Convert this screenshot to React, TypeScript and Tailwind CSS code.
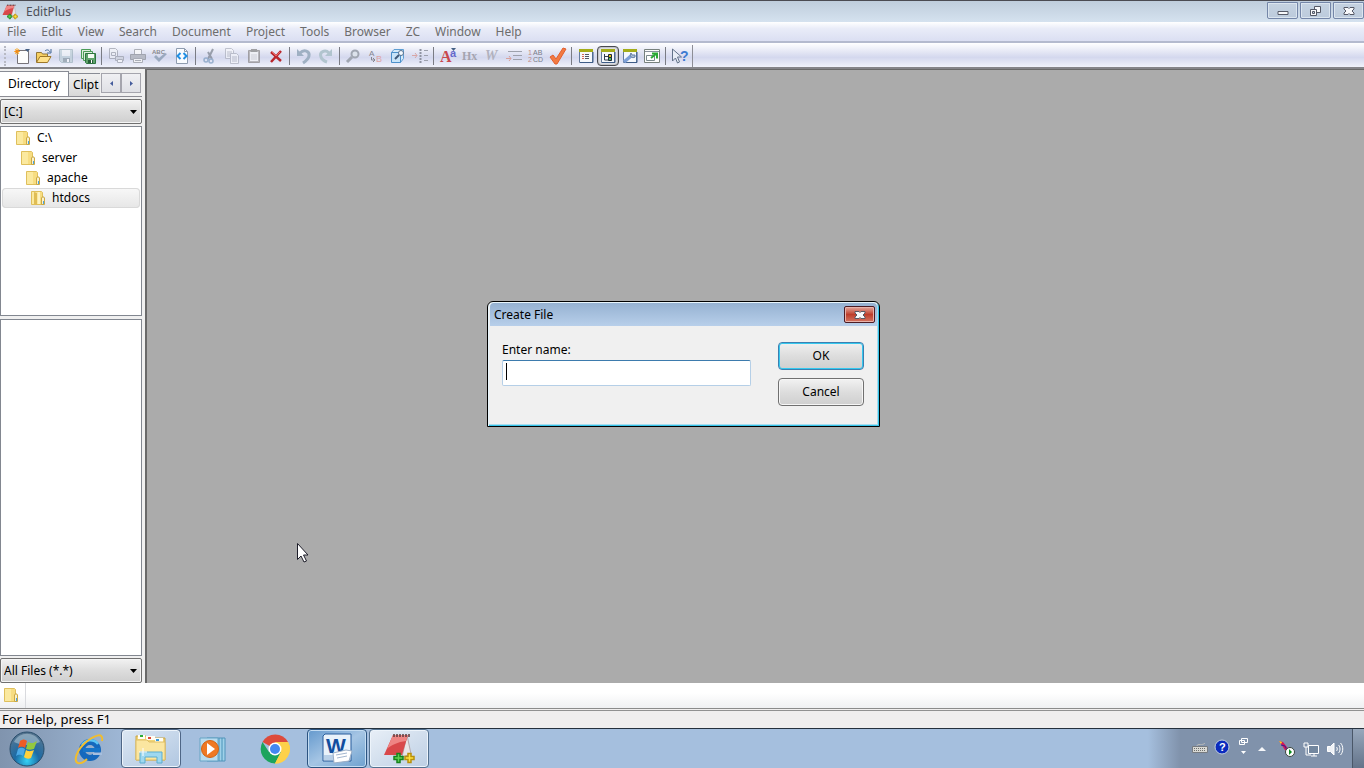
import type { ReactNode } from 'react';

interface IconProps {
  children: ReactNode;
  size?: string;
  box?: string;
}

/** Small wrapper so that every icon shares the same svg attributes. */
function Icon({ children, size = 'size-4', box = '0 0 16 16' }: IconProps) {
  return (
    <svg className={`${size} shrink-0 overflow-visible`} viewBox={box} fill="none" aria-hidden="true">
      {children}
    </svg>
  );
}

const menus = ['File', 'Edit', 'View', 'Search', 'Document', 'Project', 'Tools', 'Browser', 'ZC', 'Window', 'Help'];

const folders = [
  { name: 'C:\\', indent: 'pl-[13px]' },
  { name: 'server', indent: 'pl-[18px]' },
  { name: 'apache', indent: 'pl-[23px]' },
  { name: 'htdocs', indent: 'pl-[28px]', selected: true },
];

function EditPlusIcon({ size = 'size-4' }: { size?: string }) {
  return (
    <Icon size={size} box="0 0 32 32">
      <path d="M24 2 28 21 19 24z" fill="#e9e4e6" stroke="#b3a9ad" />
      <path d="M10 2h15l-6 20H1z" fill="#d9484a" />
      <path d="M10 2h15l-2 6C15 9 8 12 4 16z" fill="#ef8584" />
      <path d="M11 1v3M14 1v3M17 1v3M20 1v3M23 1v3M26 1v3" stroke="#5b3b3c" strokeWidth="1.5" />
      <path d="M14 20.500h3v3h3v3h-3v3h-3v-3h-3v-3h3z" fill="#5fd052" stroke="#16831c" strokeWidth="1.500" />
      <path d="M25 20.500h3v3h3v3h-3v3h-3v-3h-3v-3h3z" fill="#ffe23d" stroke="#b9900c" strokeWidth="1.500" />
    </Icon>
  );
}

function FolderIcon({ open = false }: { open?: boolean }) {
  return (
    <Icon>
      <path d="M1.500 1.500h10l1 1v12h-11z" fill="#f7dd82" stroke="#dfbf5c" />
      <path d="M2 2h6v12H2z" fill="#fbe99f" />
      {open && (
        <>
          <path d="M4 2l3 1v12l-3-1z" fill="#e0bd55" />
          <path d="M8 2h2v12H8z" fill="#fdf3c4" />
        </>
      )}
      <path d="M11.500 8c0-1.500 3-1.500 3 0v6.500h-3z" fill="#fbf1cc" stroke="#cba945" />
      <path d="M13.500 11v3" stroke="#49a3df" />
    </Icon>
  );
}

function DocPanel({ children }: { children?: ReactNode }) {
  return (
    <>
      <path d="M1.500 1.500h13v13h-13z" fill="#f5f8fc" stroke="#637b9d" />
      <path d="M1 1h14v3H1z" fill="#a4ad19" />
      <path d="M2 14.500h13V4" stroke="#3e5c87" />
      {children}
    </>
  );
}

const toolGroups: { label: string; active?: boolean; icon: ReactNode }[][] = [
  [
    {
      label: 'New',
      icon: (
        <>
          <path d="M3.500 2.500h11v13h-11z" fill="#fdfdfd" stroke="#77747a" />
          <path d="M11 1h5l-2.500 3z" fill="#456084" />
          <path d="M3 0v7M0 3.500h6M1 1l4 5M5 1 1 6" stroke="#f7b343" />
          <circle cx="3" cy="3.500" r="1.800" fill="#f28c18" />
        </>
      ),
    },
    {
      label: 'Open',
      icon: (
        <>
          <path d="M.5 14V4.500h5l1 1.500h5v3" fill="#f6cf62" stroke="#927638" />
          <path d="M.5 14.500 4 8.500h11l-3.500 6z" fill="#ffe18b" stroke="#9d7729" />
          <path d="M9 3c2-2 4-1 5 1M15 1v4h-4" stroke="#426796" />
        </>
      ),
    },
    {
      label: 'Save',
      icon: (
        <g opacity=".55">
          <path d="M1.500 1.500h13v13h-11l-2-2z" fill="#b5cad0" stroke="#8aa2ac" />
          <path d="M4 2h8v6H4z" fill="#f6f9f9" />
          <path d="M5 10h7v4H5z" fill="#70838c" />
          <path d="M9 11h2v3H9z" fill="#fff" />
        </g>
      ),
    },
    {
      label: 'Save all',
      icon: (
        <>
          <path d="M1.500 1.500h9v9h-9z" fill="#dceedd" stroke="#4b9c57" />
          <path d="M3.500 3.500h9v9h-9z" fill="#dceedd" stroke="#4b9c57" />
          <path d="M5.500 5.500h10v10h-9l-1-1z" fill="#5fa46c" stroke="#2d7540" />
          <path d="M8 6h6v4H8z" fill="#f3faf3" />
          <path d="M8 12h5v3H8z" fill="#275d39" />
          <path d="M11 12h1v3h-1z" fill="#fff" />
        </>
      ),
    },
  ],
  [
    {
      label: 'Print preview',
      icon: (
        <g opacity=".6">
          <path d="M1.500.5h6l2 2v8h-8z" fill="#f3f4f7" stroke="#8e929c" />
          <path d="M3.500 4.500h4v3h-4z" stroke="#8e929c" />
          <path d="M7.500 8.500h8v4h-8z" fill="#ccd0d8" stroke="#8e929c" />
          <path d="M9.500 11.500h5v3h-5z" fill="#fff" stroke="#8e929c" />
        </g>
      ),
    },
    {
      label: 'Print',
      icon: (
        <g opacity=".75">
          <path d="M4.500 1.500h7v5h-7z" fill="#fafafa" stroke="#999ca4" />
          <path d="M.5 6.500h15v5H.5z" fill="#adb0b8" stroke="#8d9199" />
          <path d="M3.500 10.500h9v4h-9z" fill="#f7f7f7" stroke="#999ca4" />
          <path d="M5 12.500h6" stroke="#999ca4" />
        </g>
      ),
    },
    {
      label: 'Spelling',
      icon: (
        <>
          <text x="0" y="6" fontSize="6" fontWeight="bold" fontFamily="Liberation Sans" fill="#88898f">
            ABC
          </text>
          <path d="m2 9 2-2 3 3 6-5 2 1-8 8z" fill="#9aa9bf" />
        </>
      ),
    },
    {
      label: 'View in browser',
      icon: (
        <>
          <path d="M2.500.5h8l3 3v12h-11z" fill="#fafcff" stroke="#8f9caf" />
          <path d="M10.500.5v3h3" stroke="#8f9caf" />
          <path d="m6.500 5-3 3 3 3M9.500 5l3 3-3 3" stroke="#218fe4" strokeWidth="2" />
        </>
      ),
    },
  ],
  [
    {
      label: 'Cut',
      icon: (
        <g opacity=".65">
          <path d="M11 1 6 11M6 4l4 7" stroke="#717984" strokeWidth="2" />
          <circle cx="4" cy="12" r="2" stroke="#7496bb" strokeWidth="1.500" />
          <circle cx="9" cy="13" r="2" stroke="#7496bb" strokeWidth="1.500" />
        </g>
      ),
    },
    {
      label: 'Copy',
      icon: (
        <g opacity=".6" stroke="#a2a6b2">
          <path d="M1.500.5h6l2 2v8h-8z" fill="#f7f8fb" />
          <path d="M3 4h5M3 6h5M3 8h5" />
          <path d="M6.500 5.500h6l2 2v8h-8z" fill="#f7f8fb" />
          <path d="M8 9h5M8 11h5M8 13h5" />
        </g>
      ),
    },
    {
      label: 'Paste',
      icon: (
        <g opacity=".75">
          <path d="M2.500 2.500h11v12h-11z" fill="#aba9ab" stroke="#8d8a8c" />
          <path d="M4 4h8v9H4z" fill="#f4f4f6" />
          <path d="M5 1h6v3H5z" fill="#888" />
          <path d="M5 7h6M5 9h6M5 11h6" stroke="#cbcbd0" />
        </g>
      ),
    },
    {
      label: 'Delete',
      icon: (
        <>
          <path d="m3 4 10 9M13 3 3 14" stroke="#b9262c" strokeWidth="2.500" />
          <path d="m4 4 4 4 4-4" stroke="#ec6663" />
        </>
      ),
    },
  ],
  [
    {
      label: 'Undo',
      icon: (
        <>
          <path d="M1 1v7h7z" fill="#9fb0c3" />
          <path d="M4 5c4-4 10-2 9 3-.5 3-3 5-6 7" stroke="#9fb0c3" strokeWidth="3" />
        </>
      ),
    },
    {
      label: 'Redo',
      icon: (
        <>
          <path d="M14 1v7H7z" fill="#b1c4ce" />
          <path d="M11 5C7 1 1 4 3 9c1 3 3 4 6 5" stroke="#b1c4ce" strokeWidth="3" />
        </>
      ),
    },
  ],
  [
    {
      label: 'Find',
      icon: (
        <g stroke="#a0a6b1">
          <circle cx="9" cy="6" r="3.500" fill="#dce2eb" strokeWidth="2" />
          <path d="m6 9-5 5" strokeWidth="3" />
        </g>
      ),
    },
    {
      label: 'Replace',
      icon: (
        <>
          <text x="1" y="8" fontSize="8" fontFamily="Liberation Sans" fill="#84858f">
            A
          </text>
          <text x="8" y="14" fontSize="9" fontFamily="Liberation Sans" fill="#dda5a6">
            B
          </text>
          <path d="M3.500 9v3h3M5 10l2 2-2 2" stroke="#84858f" />
        </>
      ),
    },
    {
      label: 'Find in files',
      icon: (
        <>
          <path d="M4 1.500h9.500v9l-3 4h-8l-1-1v-9z" fill="#d5eafa" stroke="#5e9ed2" />
          <path d="M1.500 4.500h9v10h-9z" fill="#c8e4f9" stroke="#4c90ca" />
          <circle cx="11" cy="5" r="2.500" fill="#f4faff" stroke="#56718f" />
          <path d="m9 7-4 4" stroke="#3e597a" strokeWidth="2" />
        </>
      ),
    },
    {
      label: 'Go to line',
      icon: (
        <>
          <path d="M0 7.500h5M3 5l2 2.500L3 10" stroke="#d8a6a5" />
          <path d="M8.500 1v14" stroke="#8f93a1" strokeWidth="2" strokeDasharray="2 1" />
          <path d="M12 2.500h4M12 7.500h4M12 12.500h4" stroke="#9da1ad" />
        </>
      ),
    },
  ],
  [
    {
      label: 'Font',
      icon: (
        <>
          <text x="0" y="14" fontSize="16" fontWeight="bold" fontFamily="Liberation Serif" fill="#c9484d">
            A
          </text>
          <text x="10" y="9" fontSize="11" fontWeight="bold" fontFamily="Liberation Sans" fill="#6468cc">
            a
          </text>
          <path d="M11 0h5l-2.500 3z" fill="#456084" />
        </>
      ),
    },
    {
      label: 'Hex viewer',
      icon: (
        <text x="0" y="12" fontSize="12" fontWeight="bold" fontFamily="Liberation Serif" fill="#a5a5b0">
          Hx
        </text>
      ),
    },
    {
      label: 'Word wrap',
      icon: (
        <text x="1" y="12" fontSize="14" fontWeight="bold" fontStyle="italic" fontFamily="Liberation Serif" fill="#b1b2be">
          W
        </text>
      ),
    },
    {
      label: 'Auto indent',
      icon: (
        <>
          <path d="M2 3.500h14M7 7.500h9M7 11.500h9" stroke="#9da1ac" />
          <path d="M0 10.500h5M3 8l2 2.500L3 13" stroke="#d8a09b" />
        </>
      ),
    },
    {
      label: 'Line number',
      icon: (
        <g fontSize="7" fontFamily="Liberation Sans">
          <text x="0" y="7" fill="#c18b84">1</text>
          <text x="5" y="7" fill="#777b88">AB</text>
          <text x="0" y="14" fill="#c18b84">2</text>
          <text x="5" y="14" fill="#777b88">CD</text>
        </g>
      ),
    },
    {
      label: 'Syntax check',
      icon: <path d="m0 9 3-2 3 4 7-11 3 1L7 16H5z" fill="#f27a42" stroke="#e25f2e" />,
    },
  ],
  [
    {
      label: 'Cliptext',
      icon: (
        <DocPanel>
          <path d="M4 6.500h2M4 8.500h2M4 10.500h2" stroke="#d46555" />
          <path d="M7 6.500h4M7 8.500h4M7 10.500h4" stroke="#4f5868" />
        </DocPanel>
      ),
    },
    {
      label: 'Directory window',
      active: true,
      icon: (
        <DocPanel>
          <path d="M4.500 6v6h4M4.500 8.500h4" stroke="#35404e" />
          <path d="M8.500 6.500h3v3h-3z" fill="#e1bf12" stroke="#1f2b33" />
          <path d="M8.500 9.500h3v3h-3z" fill="#45b96f" stroke="#1f2b33" />
        </DocPanel>
      ),
    },
    {
      label: 'Preferences',
      icon: (
        <DocPanel>
          <path d="m2 14 7-6" stroke="#7d9fd6" strokeWidth="3.500" />
          <path d="M9 5c-2 3 1 6 4 4V7h-3z" fill="#aabfd9" stroke="#637ca1" />
        </DocPanel>
      ),
    },
    {
      label: 'Full screen',
      icon: (
        <>
          <path d="M.5 1.500h15v13H.5z" fill="#fcfcfc" stroke="#77817d" />
          <path d="M1 3.500h14" stroke="#89929e" />
          <path d="M2.500 7.500h8v5h-8z" fill="#fff" stroke="#7b8a8e" />
          <path d="m7 10 5-4M8 5.500h5v5" stroke="#2ba934" strokeWidth="2" />
        </>
      ),
    },
  ],
  [
    {
      label: 'Context help',
      icon: (
        <>
          <path d="M.5 1v12l3-3 2 5 2-1-2-5h4z" fill="#e8edf6" stroke="#627289" />
          <text x="8" y="13" fontSize="14" fontWeight="bold" fontFamily="Liberation Sans" fill="#3d7ad1">
            ?
          </text>
        </>
      ),
    },
  ],
];

function TitleBar() {
  const button =
    'flex h-[17px] w-[31px] items-center justify-center rounded-b-xs border border-[#7486a8] bg-linear-to-b from-[#c5d2e1] to-[#bccbdc] shadow-[inset_0_0_0_1px_#dbe5ef]';
  return (
    <header className="flex h-[22px] shrink-0 items-center justify-between border-t border-[#4b4b52] bg-linear-to-b from-[#bfcddc] to-[#d5e2ef]">
      <h1 className="flex items-center gap-2 pl-[2px] text-[#4c5058]">
        <EditPlusIcon />
        EditPlus
      </h1>
      <div className="flex gap-[2px] self-start pt-px">
        <button className={button} aria-label="Minimize">
          <Icon>
            <path d="M3 8.500h10v3H3z" fill="#f7f8fa" stroke="#555966" />
          </Icon>
        </button>
        <button className={button} aria-label="Restore">
          <Icon>
            <path d="M6.500 3.500h6v6h-6z" fill="#f7f8fa" stroke="#555966" />
            <path d="M2.500 6.500h6v6h-6z" fill="#f7f8fa" stroke="#555966" />
            <path d="M4.500 8.500h2v2h-2z" fill="#c4d0df" stroke="#555966" />
          </Icon>
        </button>
        <button className={button} aria-label="Close">
          <Icon>
            <CloseMark />
          </Icon>
        </button>
      </div>
    </header>
  );
}

function CloseMark() {
  return (
    <>
      <path d="M3 4.500h4l1 1 1-1h4v1.500l-2 2 2 2v1.500H9l-1-1-1 1H3v-1.500l2-2-2-2z" fill="#f7f8fa" stroke="#555966" />
    </>
  );
}

function MenuBar() {
  return (
    <nav className="flex h-[21px] shrink-0 gap-[15px] border-b-2 border-[#b4bace] bg-linear-to-b from-white via-[#e9ecf8] via-35% to-[#dbdff2] pl-[7px] text-[#6d6d6d]">
      {menus.map((menu) => (
        <button key={menu}>{menu}</button>
      ))}
    </nav>
  );
}

function Toolbar() {
  return (
    <div
      role="toolbar"
      className="flex h-[26px] shrink-0 items-center border-b-2 border-[#85858a] bg-linear-to-b from-white via-[#d4d8ee] via-60% to-[#f0f2fb] pt-[2px]"
    >
      <div className="ml-1 mr-[5px] h-5 border-l-2 border-dotted border-[#b8bac4]" />
      {toolGroups.map((group, index) => (
        <div key={group[0].label} className="flex items-center">
          {index > 0 && <div className="ml-[2px] mr-[3px] h-[18px] w-px bg-[#7a7c84]" />}
          {group.map((tool) => (
            <button
              key={tool.label}
              aria-label={tool.label}
              className={`flex h-5 w-[22px] items-center justify-center ${
                tool.active ? 'rounded-sm border border-[#484a50] bg-[#e2e3e9] shadow-[inset_0_0_2px_#777]' : ''
              }`}
            >
              <Icon>{tool.icon}</Icon>
            </button>
          ))}
        </div>
      ))}
      <div className="ml-px h-[22px] w-px bg-[#8d8e96]" />
    </div>
  );
}

function Combo({ label, value }: { label: string; value: string }) {
  return (
    <div className="relative h-[25px] shrink-0">
      <select
        aria-label={label}
        className="h-full w-full appearance-none rounded-xs border border-[#707070] bg-linear-to-b from-[#f2f2f2] via-[#dddddd] via-50% to-[#cfcfcf] pl-[3px] shadow-[inset_0_0_0_1px_#f5f5f5] outline-none"
      >
        <option>{value}</option>
      </select>
      <svg className="pointer-events-none absolute right-[5px] top-[11px] h-1 w-[7px]" viewBox="0 0 7 4" aria-hidden="true">
        <path d="M0 0h7L3.500 4z" fill="#000" />
      </svg>
    </div>
  );
}

function Sidebar() {
  const arrow = 'flex h-5 w-5 items-center justify-center border border-[#a5a5ad] bg-linear-to-b from-[#f0f0f3] to-[#dfe0e5]';
  return (
    <aside className="flex w-[145px] shrink-0 flex-col bg-[#f0f0f0] pr-[3px] pt-[2px]">
      <div className="flex h-[26px] shrink-0 border-b border-[#8c8c94]" role="tablist">
        <button role="tab" aria-selected="true" className="w-[69px] shrink-0 border-r border-t border-[#898c95] bg-white">
          Directory
        </button>
        <button
          role="tab"
          aria-selected="false"
          className="mt-[2px] w-[31px] overflow-hidden border-t border-[#898c95] bg-linear-to-b from-[#f0f0f0] to-[#d8d8d8] pl-1 text-left"
        >
          Clipt
        </button>
        <div className="flex pl-px pt-[2px]">
          <button className={arrow} aria-label="Previous tab">
            <svg className="h-[5px] w-[3px]" viewBox="0 0 3 5" aria-hidden="true">
              <path d="M3 0v5L0 2.500z" fill="#455c9c" />
            </svg>
          </button>
          <button className={arrow} aria-label="Next tab">
            <svg className="h-[5px] w-[3px]" viewBox="0 0 3 5" aria-hidden="true">
              <path d="M0 0v5l3-2.500z" fill="#455c9c" />
            </svg>
          </button>
        </div>
      </div>

      <div className="mt-[2px] flex min-h-0 flex-1 flex-col">
        <Combo label="Drive" value="[C:]" />
        <ul className="mt-[2px] h-[190px] shrink-0 border border-[#828790] bg-white px-px pt-px">
          {folders.map((folder) => (
            <li key={folder.name}>
              <button
                className={`flex h-5 w-full items-center gap-[6px] ${folder.indent} ${
                  folder.selected
                    ? 'rounded-sm bg-linear-to-b from-[#f8f8f8] to-[#e6e6e6] shadow-[inset_0_0_0_1px_#d9d9d9]'
                    : ''
                }`}
              >
                <FolderIcon open={folder.selected} />
                {folder.name}
              </button>
            </li>
          ))}
        </ul>
        <div className="mb-[2px] mt-[3px] min-h-0 flex-1 border border-[#828790] bg-white" />
        <Combo label="File filter" value="All Files (*.*)" />
      </div>
    </aside>
  );
}

function CreateFileDialog() {
  return (
    <form
      role="dialog"
      aria-labelledby="dialog-title"
      className="absolute left-[487px] top-[301px] flex h-[126px] w-[393px] flex-col rounded-t-md border border-black bg-[#f0f0f0] shadow-[inset_1px_1px_0_#e8f5fc,inset_-1px_-1px_0_#35c3e8,inset_-2px_-2px_0_#a9dcee]"
    >
      <div className="mx-[2px] mt-px flex h-[23px] items-center justify-between rounded-t-sm bg-linear-to-b from-[#96b2d2] to-[#b8cfea] pl-1 pr-[2px]">
        <h2 id="dialog-title">Create File</h2>
        <button
          type="button"
          aria-label="Close dialog"
          className="flex h-[17px] w-[31px] items-center justify-center rounded-xs border border-[#4c1c24] bg-linear-to-b from-[#e3a69d] via-[#bd3d2b] via-50% to-[#d37361] shadow-[inset_0_0_0_1px_#e8b3ab]"
        >
          <Icon>
            <CloseMark />
          </Icon>
        </button>
      </div>
      <div className="flex justify-between pl-[14px] pr-[15px] pt-4">
        <div className="relative flex w-[249px] flex-col">
          <label htmlFor="file-name" className="h-[18px]">
            Enter name:
          </label>
          <input
            id="file-name"
            className="h-[26px] rounded-xs border border-[#b5cfe7] border-t-[#3d7bad] bg-white px-1 caret-transparent outline-none"
          />
          <span className="absolute left-1 top-[21px] h-[17px] w-px bg-black" />
        </div>
        <div className="flex w-[86px] flex-col gap-2">
          <button className="h-7 rounded-sm border border-[#3c7fb1] bg-linear-to-b from-[#f0f0f0] via-[#dddddd] via-50% to-[#cfcfcf] shadow-[inset_0_0_0_1px_#35c8ee]">
            OK
          </button>
          <button
            type="button"
            className="h-7 rounded-sm border border-[#707070] bg-linear-to-b from-[#f2f2f2] via-[#dddddd] via-50% to-[#cfcfcf] shadow-[inset_0_0_0_1px_#f6f6f6]"
          >
            Cancel
          </button>
        </div>
      </div>
    </form>
  );
}

const taskbarApps: { label: string; frame: string; icon: ReactNode }[] = [
  {
    label: 'Internet Explorer',
    frame: 'border-transparent',
    icon: (
      <Icon size="size-8" box="0 0 32 32">
        <circle cx="17" cy="17" r="8" stroke="#1568bd" strokeWidth="6" />
        <path d="M9 12c3-5 11-7 16-1" stroke="#5cc5f5" strokeWidth="2.500" />
        <path d="M10 15h17v4H10z" fill="#1674c9" />
        <path d="M20 19.500h9v2.500h-9z" fill="#a6bfdf" />
        <path d="M29 8c2-10-9-5-17 2S0 28 5 30c3 1 7-2 9-4" stroke="#f1bd2e" strokeWidth="2" />
      </Icon>
    ),
  },
  {
    label: 'Windows Explorer',
    frame: 'border-[#4e6686] bg-linear-to-br from-[#dce7f3] to-[#b1c7e1] shadow-[inset_0_0_0_1px_#edf4fb]',
    icon: (
      <Icon size="size-8" box="0 0 32 32">
        <path d="M1 3h10l2 2h17v22H1z" fill="#f2d578" stroke="#c8a64a" />
        <path d="M3 2h7v4H3zM11 3h9v4h-9zM20 5h8v4h-8z" fill="#fffdf4" />
        <path d="M5 2h3v2H5z" fill="#2dad36" />
        <path d="M13 4h3v2h-3z" fill="#dc4938" />
        <path d="M21 6h3v2h-3z" fill="#379bde" />
        <path d="M1 7h11l2 2h16v18H1z" fill="#fbe6a0" stroke="#dfbe64" />
        <path d="M5 30V19h22v11h-5v-6H10v6z" fill="#9ed8f0" stroke="#5aadd0" />
        <path d="M8 15v8M4 19h8" stroke="#fff" />
      </Icon>
    ),
  },
  {
    label: 'Media Player',
    frame: 'border-transparent',
    icon: (
      <Icon size="size-8" box="0 0 32 32">
        <path d="M10 5h18v23H10z" fill="#9fd1e9" stroke="#5094ba" />
        <path d="M25 5v23M22 5v23" stroke="#4a92b8" />
        <path d="M3 5h18v23H3z" fill="#b9dcef" stroke="#66a4c5" />
        <circle cx="13" cy="16" r="8.500" fill="#ef7924" stroke="#d46312" />
        <path d="m10 10 8 6-8 6z" fill="#fff" />
      </Icon>
    ),
  },
  {
    label: 'Chrome',
    frame: 'border-transparent',
    icon: (
      <Icon size="size-8" box="0 0 32 32">
        <path d="M16 16 3.500 9A14.500 14.500 0 0 1 29 9z" fill="#dd4b3c" />
        <path d="M16 16 29 9a14.500 14.500 0 0 1-13 21.500z" fill="#fdd14a" />
        <path d="m10 19-6.500-10A14.500 14.500 0 0 0 16 30.500L22 19z" fill="#1ca45d" />
        <path d="M22 19 16 30.500A14.500 14.500 0 0 0 29 9H16z" fill="#fdd14a" />
        <circle cx="16" cy="16" r="6.500" fill="#fff" />
        <circle cx="16" cy="16" r="5" fill="#4587f0" />
      </Icon>
    ),
  },
  {
    label: 'Word',
    frame: 'border-[#2c5481] bg-linear-to-br from-[#6499cd] via-[#a5c5e4] to-[#6ea1cf] shadow-[inset_0_0_0_1px_#c3dcf2]',
    icon: (
      <Icon size="size-8" box="0 0 32 32">
        <path d="M4 1h26v27H2V3z" fill="#e9f2fa" stroke="#285d9c" />
        <path d="M3 22h26v5H3z" fill="#b9d0e8" />
        <text x="5" y="20" fontSize="21" fontWeight="bold" fontFamily="Liberation Sans" fill="#124e9e">
          W
        </text>
        <path d="m12 20 13-3 6 1-3 10-15 2z" fill="#fff" stroke="#9cafc6" />
        <path d="m15 22 11-2M16 25l10-2" stroke="#a4b7cf" />
      </Icon>
    ),
  },
  {
    label: 'EditPlus',
    frame: 'border-[#52708f] bg-linear-to-br from-[#e8eff7] to-[#bdcfe4] shadow-[inset_0_0_0_1px_#edf4fb]',
    icon: <EditPlusIcon size="size-8" />,
  },
];

function Tray() {
  return (
    <div className="flex h-full items-center bg-linear-to-r from-[#a5bfde] to-[#8092ab] to-15% pl-11">
      <button aria-label="Keyboard">
        <Icon>
          <path d="M5 5c0-3 6 0 8-3" stroke="#b8b9b8" />
          <path d="M.5 5.500h15v6H.5z" fill="#d9d9d5" stroke="#777b80" />
          <path d="M2 7.500h12M2 9.500h12" stroke="#6f716f" strokeDasharray="1 1" />
        </Icon>
      </button>
      <button aria-label="Input help" className="ml-[6px] pb-1">
        <Icon>
          <circle cx="8" cy="8" r="7" fill="#0b2bbd" stroke="#c2cfdf" />
          <text x="5" y="12" fontSize="11" fontWeight="bold" fontFamily="Liberation Sans" fill="#fff">
            ?
          </text>
        </Icon>
      </button>
      <button aria-label="Language bar" className="ml-2 pb-[7px]">
        <Icon size="h-4 w-3" box="0 0 12 16">
          <path d="M3.500 1.500h6v4h-6zM1.500 3.500h5v4h-5z" fill="#7f92ac" stroke="#fff" />
          <path d="M3 14h5l-2.500 3z" fill="#fff" />
        </Icon>
      </button>
      <button aria-label="Show hidden icons" className="ml-[6px]">
        <Icon size="h-3 w-3" box="0 0 12 12">
          <path d="m2 8 4-4 4 4z" fill="#f5f7fa" />
        </Icon>
      </button>
      <button aria-label="Downloads" className="ml-[11px]">
        <Icon>
          <path d="m0 0 4 1 7 9-3 2z" fill="#d71558" />
          <path d="m0 0 3 1-1 2z" fill="#ffe416" />
          <path d="m2 4 4 1 2 4" stroke="#321d91" />
          <circle cx="11" cy="11" r="4.500" fill="#fff" stroke="#38443c" />
          <path d="m10 8 3 3-3 3z" fill="#0a8b1c" />
        </Icon>
      </button>
      <button aria-label="Network" className="ml-2">
        <Icon>
          <path d="M5.500 4.500h10v8h-10z" fill="#73879f" stroke="#fff" />
          <path d="M8 15h6M11 12v3M1 2v4h4V2M3 6v8h5M2 1v2M4 1v2" stroke="#fff" />
        </Icon>
      </button>
      <button aria-label="Volume" className="ml-2">
        <Icon>
          <path d="M.5 5.500h3L7 2v12l-3.500-3.500h-3z" fill="#eef1f5" stroke="#fff" />
          <path d="M9.500 6c1 1 1 3 0 4M11.500 4c2 2 2 6 0 8M13.500 2c3 3 3 9 0 12" stroke="#fff" />
        </Icon>
      </button>
      <button
        aria-label="Show desktop"
        className="ml-[9px] h-full w-3 border-l border-[#4a5768] bg-linear-to-b from-[#98a8bc] to-[#64748a]"
      />
    </div>
  );
}

function Taskbar() {
  return (
    <footer className="flex h-10 shrink-0 items-center justify-between border-t border-[#25303d] bg-[#a5bfde]">
      <div className="flex h-full items-center gap-[2px] bg-linear-to-r from-[#8094ae] to-[#a5bfde] to-35%">
        <button aria-label="Start" className="flex w-[57px] justify-center pr-1">
          <Icon size="size-9" box="0 0 36 36">
            <defs>
              <radialGradient id="orb" cx=".5" cy=".85" r=".8">
                <stop offset="0" stopColor="#35d2f5" />
                <stop offset=".45" stopColor="#1c6ba5" />
                <stop offset="1" stopColor="#557590" />
              </radialGradient>
            </defs>
            <circle cx="18" cy="18" r="17" fill="url(#orb)" stroke="#284d6b" />
            <path d="M5 11C10 0 26 0 31 11c-8 4-18 4-26 0z" fill="#b4cbd9" opacity=".55" />
            <path d="M11 10c3-2 5-2 7 0l-2 7c-3-2-5-1-7 0z" fill="#ee5b26" />
            <path d="M19 11c3 2 6 1 9-1l-3 8c-3 1-5 1-8 0z" fill="#93c83e" />
            <path d="M9 18c3-2 5-1 7 0l-2 7c-3-2-5-1-7 0z" fill="#4ba9e6" />
            <path d="M17 19c3 2 5 1 8 0l-3 8c-2 1-5 1-7-1z" fill="#ffd13c" />
          </Icon>
        </button>
        {taskbarApps.map((app) => (
          <button
            key={app.label}
            aria-label={app.label}
            className={`flex h-[39px] w-[60px] items-center justify-center rounded-sm border ${app.frame}`}
          >
            {app.icon}
          </button>
        ))}
      </div>
      <Tray />
    </footer>
  );
}

export default function App() {
  return (
    <div className="relative flex h-screen flex-col overflow-hidden bg-[#f0eeee] font-['Noto_Sans','Open_Sans',sans-serif] text-xs text-black">
      <TitleBar />
      <MenuBar />
      <Toolbar />

      <div className="flex min-h-0 flex-1">
        <Sidebar />
        <main className="flex-1 border-l-2 border-t border-[#696969] bg-[#ababab]" />
      </div>

      {/* Document selector */}
      <div className="flex h-[26px] shrink-0 items-center border-b border-[#8b8b8b] bg-linear-to-b from-white via-white via-40% to-[#eff0f2]">
        <div className="flex h-full w-[26px] items-center border-r border-[#d9dade] pb-px pl-[3px]">
          <FolderIcon />
        </div>
      </div>

      {/* Status bar */}
      <div className="mt-px flex h-[18px] shrink-0 items-center border-t border-[#919191] pl-[2px] text-[13px]">
        For Help, press F1
      </div>

      <Taskbar />
      <CreateFileDialog />

      {/* Mouse pointer */}
      <svg className="pointer-events-none absolute left-[297px] top-[543px] h-5 w-3" viewBox="0 0 12 20" aria-hidden="true">
        <path d="M.5.5v16l3.500-3.500 3 6 2.500-1-3-6H11z" fill="#fff" stroke="#1d1d29" />
      </svg>
    </div>
  );
}
